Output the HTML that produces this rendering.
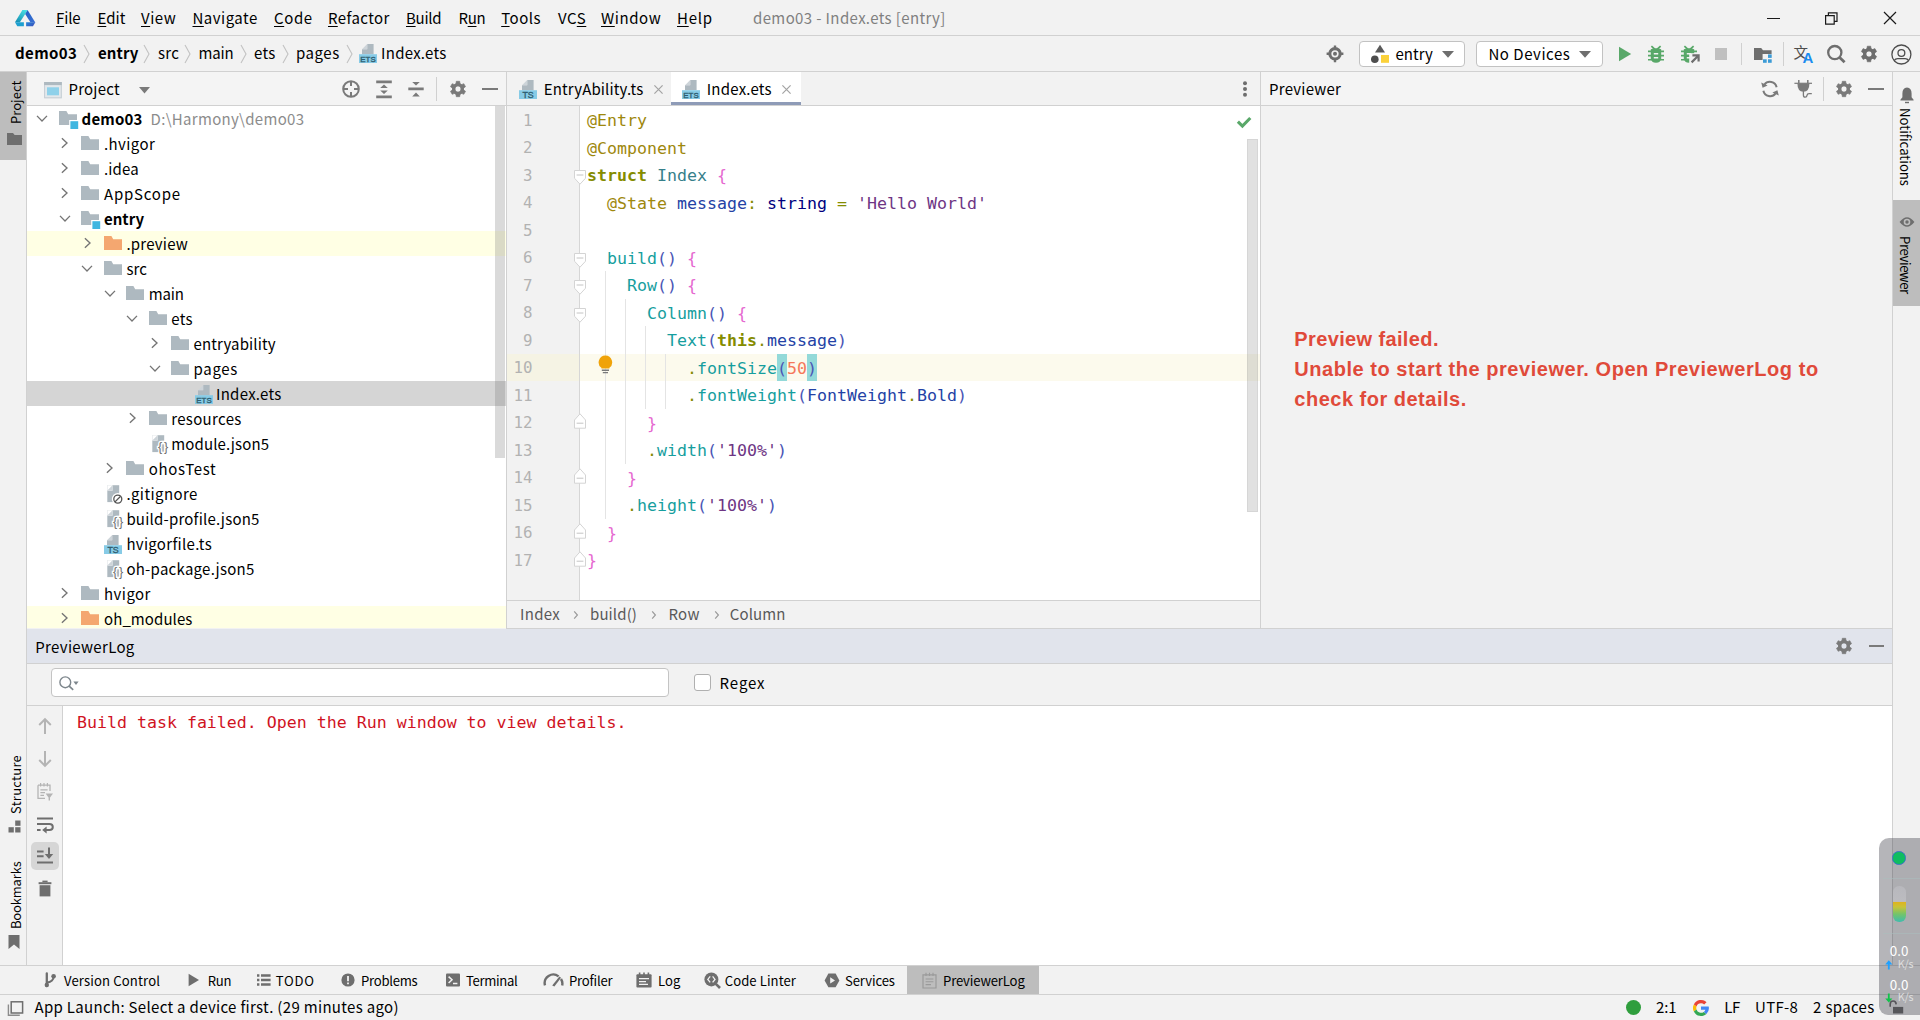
<!DOCTYPE html>
<html lang="en"><head><meta charset="utf-8"><title>demo03 - Index.ets [entry]</title>
<style>
html,body{margin:0;padding:0;}
body{width:1920px;height:1020px;overflow:hidden;background:#f2f2f2;position:relative;font-family:"Noto Sans CJK SC","Liberation Sans",sans-serif;}
.b{position:absolute;box-sizing:border-box;display:block;}
.t{position:absolute;white-space:pre;line-height:normal;color:#000;}
u{text-decoration:underline;text-underline-offset:2px;text-decoration-thickness:1px;}
</style></head>
<body>
<div class="b" style="left:0px;top:35px;width:1920px;height:1px;background:#d1d1d1;"></div>
<svg class="b" style="left:14.9px;top:9.8px;" width="21" height="17" viewBox="0 0 21 17"><defs><linearGradient id="lgc" x1="0.8" y1="0" x2="0.2" y2="1"><stop offset="0" stop-color="#48e0e2"/><stop offset="1" stop-color="#1690b4"/></linearGradient><linearGradient id="lgb" x1="0" y1="0" x2="1" y2="1"><stop offset="0" stop-color="#1f62c4"/><stop offset="1" stop-color="#3b6fd4"/></linearGradient><linearGradient id="lgr" x1="0" y1="0" x2="1" y2="0.6"><stop offset="0" stop-color="#2488d8"/><stop offset="1" stop-color="#3a55c0"/></linearGradient></defs><path d="M7.4 0H12.6L10.2 4.1L4.9 12.2H0Z" fill="url(#lgc)"/><path d="M12.6 0L20.3 12.4L15.4 12.2L10.2 4.1Z" fill="url(#lgb)"/><path d="M0 12.2H8.9V16.2H2.3Z" fill="#1c9fd0"/><path d="M11.1 12.2H20.3L18 16.2H11.1Z" fill="url(#lgr)"/></svg>
<div class="b" style="left:1767px;top:18px;width:13px;height:1px;background:#1a1a1a;"></div>
<svg class="b" style="left:1824.6px;top:11.6px;" width="13" height="13" viewBox="0 0 13 13"><path d="M0.6 3.6h8.6v8.6h-8.6z M3.4 3.6v-2.8h8.6v8.6h-2.8" fill="none" stroke="#1a1a1a" stroke-width="1.2"/></svg>
<svg class="b" style="left:1883px;top:11px;" width="14" height="14" viewBox="0 0 14 14"><path d="M1 1L13 13M13 1L1 13" stroke="#1a1a1a" stroke-width="1.2" fill="none"/></svg>
<div class="b" style="left:0px;top:71px;width:1920px;height:1px;background:#d1d1d1;"></div>
<svg class="b" style="left:83.1px;top:44px;" width="8" height="20" viewBox="0 0 8 20"><path d="M1 1 L6 10 L1 19" fill="none" stroke="#c2c2c2" stroke-width="1.1"/></svg>
<svg class="b" style="left:143.1px;top:44px;" width="8" height="20" viewBox="0 0 8 20"><path d="M1 1 L6 10 L1 19" fill="none" stroke="#c2c2c2" stroke-width="1.1"/></svg>
<svg class="b" style="left:183.6px;top:44px;" width="8" height="20" viewBox="0 0 8 20"><path d="M1 1 L6 10 L1 19" fill="none" stroke="#c2c2c2" stroke-width="1.1"/></svg>
<svg class="b" style="left:239.6px;top:44px;" width="8" height="20" viewBox="0 0 8 20"><path d="M1 1 L6 10 L1 19" fill="none" stroke="#c2c2c2" stroke-width="1.1"/></svg>
<svg class="b" style="left:281.6px;top:44px;" width="8" height="20" viewBox="0 0 8 20"><path d="M1 1 L6 10 L1 19" fill="none" stroke="#c2c2c2" stroke-width="1.1"/></svg>
<svg class="b" style="left:345.6px;top:44px;" width="8" height="20" viewBox="0 0 8 20"><path d="M1 1 L6 10 L1 19" fill="none" stroke="#c2c2c2" stroke-width="1.1"/></svg>
<svg class="b" style="left:359px;top:44px;" width="18" height="19" viewBox="0 0 18 19"><path d="M3 0H14.6V10.2H3Z" fill="#aeb9c0"/><path d="M3 0H8.2V5.2H3Z" fill="#f2f2f2"/><path d="M8.2 0V5.2H3Z" fill="#cdd4d9"/><rect x="0" y="10.2" width="18" height="8.8" fill="#87cbe6"/><text x="9" y="17.5" font-family="Liberation Sans, sans-serif" font-size="7.9" text-anchor="middle" fill="#2f5d70" stroke="#2f5d70" stroke-width="0.35">ETS</text></svg>
<svg class="b" style="left:1325px;top:44px;" width="20" height="20" viewBox="0 0 20 20"><circle cx="10" cy="9.8" r="5.2" fill="none" stroke="#6e6e6e" stroke-width="3.1"/><circle cx="10" cy="9.8" r="2" fill="#6e6e6e"/><path d="M10 1.4V4M10 15.6V18.2M1.6 9.8H4.2M15.8 9.8H18.4" stroke="#6e6e6e" stroke-width="2.4"/></svg>
<div class="b" style="left:1359px;top:40.5px;width:106px;height:26.5px;background:#fff;border:1px solid #c2c2c2;border-radius:4px;"></div>
<div class="b" style="left:1476px;top:40.5px;width:126.5px;height:26.5px;background:#fff;border:1px solid #c2c2c2;border-radius:4px;"></div>
<svg class="b" style="left:1370px;top:44px;" width="20" height="20" viewBox="0 0 20 20"><path d="M10 0.7L15 8.6H5Z" fill="#5a5a5a"/><circle cx="4.8" cy="15.2" r="3.8" fill="#4d4d4d"/><rect x="11" y="11" width="8" height="7.8" fill="#fbd13a"/></svg>
<svg class="b" style="left:1441.5px;top:51px;" width="12" height="7" viewBox="0 0 12 7"><path d="M0 0H12L6 6.8Z" fill="#6e6e6e"/></svg>
<svg class="b" style="left:1578.5px;top:51px;" width="12" height="7" viewBox="0 0 12 7"><path d="M0 0H12L6 6.8Z" fill="#6e6e6e"/></svg>
<svg class="b" style="left:1619px;top:46px;" width="13" height="16" viewBox="0 0 13 16"><path d="M0 0.7L12.2 8L0 15.3Z" fill="#59a869"/></svg>
<svg class="b" style="left:1648px;top:45px;" width="17" height="19" viewBox="0 0 17 19"><g transform="translate(0,0.7)"><g fill="#59a869"><path d="M2.8 3.6Q8 1.6 13.2 3.6V12.5Q12.6 17 8 17Q3.4 17 2.8 12.5Z"/><path d="M0 4.9H16V6.5H0ZM0 9.1H16V10.7H0ZM0 13.3H16V14.9H0Z"/></g><path d="M3.4 0.5L7 3.8M12.6 0.5L9 3.8" stroke="#59a869" stroke-width="1.7" fill="none"/><path d="M5.8 7.4H10.2V8.8H5.8ZM5.8 11.3H10.2V12.7H5.8Z" fill="#f2f2f2"/></g></svg>
<svg class="b" style="left:1681px;top:45px;" width="20" height="19" viewBox="0 0 20 19"><g transform="translate(0,0.7)"><g fill="#59a869"><path d="M2.8 3.6Q8 1.6 13.2 3.6V12.5Q12.6 17 8 17Q3.4 17 2.8 12.5Z"/><path d="M0 4.9H16V6.5H0ZM0 9.1H16V10.7H0ZM0 13.3H16V14.9H0Z"/></g><path d="M3.4 0.5L7 3.8M12.6 0.5L9 3.8" stroke="#59a869" stroke-width="1.7" fill="none"/><path d="M5.8 7.4H10.2V8.8H5.8ZM5.8 11.3H10.2V12.7H5.8Z" fill="#f2f2f2"/></g><path d="M8.2 8.2H20V19H8.2Z" fill="#f2f2f2"/><path d="M10.6 17.4L17 11M11.4 10.4H17.6V16.6" fill="none" stroke="#6e6e6e" stroke-width="2.2"/></svg>
<div class="b" style="left:1715px;top:48px;width:12px;height:12px;background:#c0c0c0;"></div>
<div class="b" style="left:1741px;top:43px;width:1px;height:22px;background:#d0d0d0;"></div>
<svg class="b" style="left:1754px;top:47.8px;" width="18" height="15" viewBox="0 0 18 15"><path d="M0 0H7.2L9 2.2H17.6V6H8.6V12H0Z" fill="#6e6e6e"/><rect x="14" y="6.4" width="3.7" height="3.5" fill="#3b9bd6"/><rect x="9" y="11.3" width="3.7" height="3.5" fill="#3b9bd6"/><rect x="14" y="11.3" width="3.7" height="3.5" fill="#3b9bd6"/></svg>
<div class="b" style="left:1783px;top:42px;width:1px;height:23.5px;background:#d0d0d0;"></div>
<svg class="b" style="left:1792px;top:43px;" width="24" height="22" viewBox="0 0 24 22"><text x="1.6" y="15.2" font-family="Noto Sans CJK SC, sans-serif" font-size="14.5" fill="#4d4d4d">文</text><text x="10.6" y="19.6" font-family="Liberation Sans, sans-serif" font-weight="700" font-size="15" fill="#1a8cf0">A</text></svg>
<svg class="b" style="left:1825px;top:43px;" width="22" height="22" viewBox="0 0 22 22"><circle cx="9.8" cy="9.6" r="6.6" fill="none" stroke="#6e6e6e" stroke-width="2.3"/><path d="M14.4 14.2L19.6 19.2" stroke="#6e6e6e" stroke-width="2.8"/></svg>
<svg class="b" style="left:1859px;top:44px;" width="20" height="20" viewBox="0 0 20 20"><circle cx="10" cy="10" r="4.50" fill="none" stroke="#6e6e6e" stroke-width="3.00"/><path d="M7.95 4.79L8.26 2.19L11.74 2.19L12.05 4.79L13.49 5.62L15.90 4.59L17.63 7.60L15.54 9.17L15.54 10.83L17.63 12.40L15.90 15.41L13.49 14.38L12.05 15.21L11.74 17.81L8.26 17.81L7.95 15.21L6.51 14.38L4.10 15.41L2.37 12.40L4.46 10.83L4.46 9.17L2.37 7.60L4.10 4.59L6.51 5.62ZM13.00 10.00A3.0 3.0 0 1 0 7.00 10.00A3.0 3.0 0 1 0 13.00 10.00Z" fill="#6e6e6e" fill-rule="evenodd" stroke="#6e6e6e" stroke-width="0.6" stroke-linejoin="round"/></svg>
<svg class="b" style="left:1889.5px;top:42.5px;" width="23" height="23" viewBox="0 0 23 23"><circle cx="11.4" cy="11.5" r="9.5" fill="none" stroke="#4d4d4d" stroke-width="1.3"/><circle cx="11.4" cy="10" r="3.4" fill="none" stroke="#4d4d4d" stroke-width="1.3"/><path d="M4.2 17.6Q5.4 15.6 7.6 15.6H15.2Q17.4 15.6 18.6 17.6" fill="none" stroke="#4d4d4d" stroke-width="1.3"/></svg>
<div class="b" style="left:26px;top:72px;width:1px;height:893px;background:#d1d1d1;"></div>
<div class="b" style="left:0px;top:72px;width:26px;height:88px;background:#bdbdbd;"></div>
<svg class="b" style="left:7px;top:132.5px;" width="15" height="12" viewBox="0 0 15 12"><path d="M0 0H6L7.6 2H15V12H0Z" fill="#6e6e6e"/></svg>
<svg class="b" style="left:8px;top:820px;" width="13" height="13" viewBox="0 0 13 13"><rect x="7.2" y="0.5" width="5.3" height="5.3" fill="#6e6e6e"/><rect x="0.5" y="7.2" width="5.3" height="5.3" fill="#6e6e6e"/><rect x="7.2" y="7.2" width="5.3" height="5.3" fill="#6e6e6e"/></svg>
<svg class="b" style="left:8px;top:935px;" width="12" height="14" viewBox="0 0 12 14"><path d="M0.5 0H11.5V14L6 9.6L0.5 14Z" fill="#6e6e6e"/></svg>
<div class="b" style="left:27px;top:105px;width:479px;height:1px;background:#d1d1d1;"></div>
<div class="b" style="left:27px;top:106px;width:479px;height:522px;background:#fff;"></div>
<div class="b" style="left:506px;top:72px;width:1px;height:557px;background:#d1d1d1;"></div>
<div class="b" style="left:27px;top:72px;width:479px;height:33px;background:#f4f4f4;"></div>
<svg class="b" style="left:44px;top:81.5px;" width="18" height="17" viewBox="0 0 18 17"><rect x="0.1" y="0" width="17.7" height="16.3" fill="#e3e8eb"/><rect x="0.6" y="0.5" width="16.7" height="15.3" fill="none" stroke="#c5cdd3" stroke-width="1"/><rect x="0.1" y="0" width="17.7" height="3.1" fill="#aeb9c0"/><rect x="3" y="5.3" width="12" height="8" fill="#8fd1ea"/></svg>
<svg class="b" style="left:139.4px;top:87.2px;" width="11" height="7" viewBox="0 0 11 7"><path d="M0 0H11L5.5 6.6Z" fill="#7a7a7a"/></svg>
<svg class="b" style="left:341px;top:79px;" width="20" height="20" viewBox="0 0 20 20"><circle cx="10" cy="10" r="7.8" fill="none" stroke="#7a7a7a" stroke-width="2"/><path d="M10 2.4V7M10 13V17.6M2.4 10H7M13 10H17.6" stroke="#7a7a7a" stroke-width="2"/></svg>
<svg class="b" style="left:376px;top:79.6px;" width="16" height="19" viewBox="0 0 16 19"><path d="M0.2 0.4H15.8V3.2H0.2ZM0.2 15.4H15.8V18.2H0.2ZM8 4.6L11.8 8H4.2ZM8 14L11.8 10.6H4.2Z" fill="#7a7a7a"/></svg>
<svg class="b" style="left:408px;top:80px;" width="16" height="18" viewBox="0 0 16 18"><path d="M0.3 7.6H15.7V10.3H0.3ZM8 5.4L11.8 2H4.2ZM8 12.6L11.8 16.4H4.2Z" fill="#7a7a7a"/></svg>
<div class="b" style="left:436px;top:77px;width:1px;height:24px;background:#d0d0d0;"></div>
<svg class="b" style="left:447.9px;top:79px;" width="20" height="20" viewBox="0 0 20 20"><circle cx="10" cy="10" r="4.44" fill="none" stroke="#7a7a7a" stroke-width="2.96"/><path d="M7.95 4.86L8.26 2.29L11.74 2.29L12.05 4.86L13.42 5.66L15.81 4.64L17.54 7.65L15.47 9.21L15.47 10.79L17.54 12.35L15.81 15.36L13.42 14.34L12.05 15.14L11.74 17.71L8.26 17.71L7.95 15.14L6.58 14.34L4.19 15.36L2.46 12.35L4.53 10.79L4.53 9.21L2.46 7.65L4.19 4.64L6.58 5.66ZM12.96 10.00A2.9625000000000004 2.9625000000000004 0 1 0 7.04 10.00A2.9625000000000004 2.9625000000000004 0 1 0 12.96 10.00Z" fill="#7a7a7a" fill-rule="evenodd" stroke="#7a7a7a" stroke-width="0.6" stroke-linejoin="round"/></svg>
<div class="b" style="left:482.4px;top:87.8px;width:15.4px;height:2.4px;background:#7a7a7a;"></div>
<div class="b" style="left:27px;top:231px;width:479px;height:25px;background:#ffffe4;"></div>
<div class="b" style="left:27px;top:381px;width:479px;height:25px;background:#d5d5d5;"></div>
<div class="b" style="left:27px;top:606px;width:479px;height:22px;background:#ffffe4;"></div>
<svg class="b" style="left:36.0px;top:114.8px;" width="12" height="8" viewBox="0 0 12 8"><path d="M1 0.9L6 6L11 0.9" fill="none" stroke="#747474" stroke-width="1.35"/></svg>
<svg class="b" style="left:58.8px;top:111.3px;" width="20" height="18" viewBox="0 0 20 18"><path d="M0 0H7.4L9.2 3.2H18V14H0Z" fill="#aeb9c0"/><rect x="10.2" y="9" width="9.8" height="9" fill="#fff"/><rect x="11.4" y="10.2" width="7.8" height="7.8" fill="#40b6e0"/></svg>
<svg class="b" style="left:61.4px;top:136.8px;" width="8" height="12" viewBox="0 0 8 12"><path d="M0.9 1.2L6 6L0.9 10.8" fill="none" stroke="#747474" stroke-width="1.35"/></svg>
<svg class="b" style="left:81.3px;top:136.1px;" width="18" height="14" viewBox="0 0 18 14"><path d="M0 0H7.4L9.2 3.2H18V14H0Z" fill="#aeb9c0"/></svg>
<svg class="b" style="left:61.4px;top:161.8px;" width="8" height="12" viewBox="0 0 8 12"><path d="M0.9 1.2L6 6L0.9 10.8" fill="none" stroke="#747474" stroke-width="1.35"/></svg>
<svg class="b" style="left:81.3px;top:161.1px;" width="18" height="14" viewBox="0 0 18 14"><path d="M0 0H7.4L9.2 3.2H18V14H0Z" fill="#aeb9c0"/></svg>
<svg class="b" style="left:61.4px;top:186.8px;" width="8" height="12" viewBox="0 0 8 12"><path d="M0.9 1.2L6 6L0.9 10.8" fill="none" stroke="#747474" stroke-width="1.35"/></svg>
<svg class="b" style="left:81.3px;top:186.1px;" width="18" height="14" viewBox="0 0 18 14"><path d="M0 0H7.4L9.2 3.2H18V14H0Z" fill="#aeb9c0"/></svg>
<svg class="b" style="left:58.5px;top:214.8px;" width="12" height="8" viewBox="0 0 12 8"><path d="M1 0.9L6 6L11 0.9" fill="none" stroke="#747474" stroke-width="1.35"/></svg>
<svg class="b" style="left:81.3px;top:211.3px;" width="20" height="18" viewBox="0 0 20 18"><path d="M0 0H7.4L9.2 3.2H18V14H0Z" fill="#aeb9c0"/><rect x="10.2" y="9" width="9.8" height="9" fill="#fff"/><rect x="11.4" y="10.2" width="7.8" height="7.8" fill="#40b6e0"/></svg>
<svg class="b" style="left:83.9px;top:236.8px;" width="8" height="12" viewBox="0 0 8 12"><path d="M0.9 1.2L6 6L0.9 10.8" fill="none" stroke="#747474" stroke-width="1.35"/></svg>
<svg class="b" style="left:103.8px;top:236.1px;" width="18" height="14" viewBox="0 0 18 14"><path d="M0 0H7.4L9.2 3.2H18V14H0Z" fill="#f4a770"/></svg>
<svg class="b" style="left:81.0px;top:264.8px;" width="12" height="8" viewBox="0 0 12 8"><path d="M1 0.9L6 6L11 0.9" fill="none" stroke="#747474" stroke-width="1.35"/></svg>
<svg class="b" style="left:103.8px;top:261.1px;" width="18" height="14" viewBox="0 0 18 14"><path d="M0 0H7.4L9.2 3.2H18V14H0Z" fill="#aeb9c0"/></svg>
<svg class="b" style="left:103.5px;top:289.8px;" width="12" height="8" viewBox="0 0 12 8"><path d="M1 0.9L6 6L11 0.9" fill="none" stroke="#747474" stroke-width="1.35"/></svg>
<svg class="b" style="left:126.3px;top:286.1px;" width="18" height="14" viewBox="0 0 18 14"><path d="M0 0H7.4L9.2 3.2H18V14H0Z" fill="#aeb9c0"/></svg>
<svg class="b" style="left:126.0px;top:314.8px;" width="12" height="8" viewBox="0 0 12 8"><path d="M1 0.9L6 6L11 0.9" fill="none" stroke="#747474" stroke-width="1.35"/></svg>
<svg class="b" style="left:148.8px;top:311.1px;" width="18" height="14" viewBox="0 0 18 14"><path d="M0 0H7.4L9.2 3.2H18V14H0Z" fill="#aeb9c0"/></svg>
<svg class="b" style="left:151.4px;top:336.8px;" width="8" height="12" viewBox="0 0 8 12"><path d="M0.9 1.2L6 6L0.9 10.8" fill="none" stroke="#747474" stroke-width="1.35"/></svg>
<svg class="b" style="left:171.3px;top:336.1px;" width="18" height="14" viewBox="0 0 18 14"><path d="M0 0H7.4L9.2 3.2H18V14H0Z" fill="#aeb9c0"/></svg>
<svg class="b" style="left:148.5px;top:364.8px;" width="12" height="8" viewBox="0 0 12 8"><path d="M1 0.9L6 6L11 0.9" fill="none" stroke="#747474" stroke-width="1.35"/></svg>
<svg class="b" style="left:171.3px;top:361.1px;" width="18" height="14" viewBox="0 0 18 14"><path d="M0 0H7.4L9.2 3.2H18V14H0Z" fill="#aeb9c0"/></svg>
<svg class="b" style="left:194.8px;top:385px;" width="18" height="19" viewBox="0 0 18 19"><path d="M3 0H14.6V10.2H3Z" fill="#aeb9c0"/><path d="M3 0H8.2V5.2H3Z" fill="#d5d5d5"/><path d="M8.2 0V5.2H3Z" fill="#cdd4d9"/><rect x="0" y="10.2" width="18" height="8.8" fill="#87cbe6"/><text x="9" y="17.5" font-family="Liberation Sans, sans-serif" font-size="7.9" text-anchor="middle" fill="#2f5d70" stroke="#2f5d70" stroke-width="0.35">ETS</text></svg>
<svg class="b" style="left:128.9px;top:411.8px;" width="8" height="12" viewBox="0 0 8 12"><path d="M0.9 1.2L6 6L0.9 10.8" fill="none" stroke="#747474" stroke-width="1.35"/></svg>
<svg class="b" style="left:148.8px;top:411.1px;" width="18" height="14" viewBox="0 0 18 14"><path d="M0 0H7.4L9.2 3.2H18V14H0Z" fill="#aeb9c0"/></svg>
<svg class="b" style="left:148.8px;top:433.6px;" width="22" height="22" viewBox="0 0 22 22"><path d="M3.3 1.2H15.2V18.1H3.3Z" fill="#aeb9c0"/><path d="M3.3 1.2H8.6V6.6H3.3Z" fill="#fff"/><path d="M8.6 1.2V6.6H3.3Z" fill="#cdd4d9"/><text x="15" y="16.7" font-family="Liberation Sans, sans-serif" font-size="12.6" text-anchor="middle" letter-spacing="1.7" fill="#6e6e6e" stroke="#fff" stroke-width="2.6" paint-order="stroke">{}</text></svg>
<svg class="b" style="left:106.4px;top:461.8px;" width="8" height="12" viewBox="0 0 8 12"><path d="M0.9 1.2L6 6L0.9 10.8" fill="none" stroke="#747474" stroke-width="1.35"/></svg>
<svg class="b" style="left:126.3px;top:461.1px;" width="18" height="14" viewBox="0 0 18 14"><path d="M0 0H7.4L9.2 3.2H18V14H0Z" fill="#aeb9c0"/></svg>
<svg class="b" style="left:103.8px;top:483.6px;" width="22" height="22" viewBox="0 0 22 22"><path d="M3.3 1.2H15.2V18.1H3.3Z" fill="#aeb9c0"/><path d="M3.3 1.2H8.6V6.6H3.3Z" fill="#fff"/><path d="M8.6 1.2V6.6H3.3Z" fill="#cdd4d9"/><circle cx="13.8" cy="15.1" r="6" fill="#fff"/><circle cx="13.8" cy="15.1" r="4" fill="none" stroke="#555" stroke-width="1.3"/><path d="M11 17.9L16.6 12.3" stroke="#555" stroke-width="1.3"/></svg>
<svg class="b" style="left:103.8px;top:508.6px;" width="22" height="22" viewBox="0 0 22 22"><path d="M3.3 1.2H15.2V18.1H3.3Z" fill="#aeb9c0"/><path d="M3.3 1.2H8.6V6.6H3.3Z" fill="#fff"/><path d="M8.6 1.2V6.6H3.3Z" fill="#cdd4d9"/><text x="15" y="16.7" font-family="Liberation Sans, sans-serif" font-size="12.6" text-anchor="middle" letter-spacing="1.7" fill="#6e6e6e" stroke="#fff" stroke-width="2.6" paint-order="stroke">{}</text></svg>
<svg class="b" style="left:104.3px;top:535px;" width="18" height="19" viewBox="0 0 18 19"><path d="M3 0H14.6V10.2H3Z" fill="#aeb9c0"/><path d="M3 0H8.2V5.2H3Z" fill="#fff"/><path d="M8.2 0V5.2H3Z" fill="#cdd4d9"/><rect x="0" y="10.2" width="18" height="8.8" fill="#87cbe6"/><text x="9" y="17.5" font-family="Liberation Sans, sans-serif" font-size="8.8" text-anchor="middle" fill="#2f5d70" stroke="#2f5d70" stroke-width="0.35">TS</text></svg>
<svg class="b" style="left:103.8px;top:558.6px;" width="22" height="22" viewBox="0 0 22 22"><path d="M3.3 1.2H15.2V18.1H3.3Z" fill="#aeb9c0"/><path d="M3.3 1.2H8.6V6.6H3.3Z" fill="#fff"/><path d="M8.6 1.2V6.6H3.3Z" fill="#cdd4d9"/><text x="15" y="16.7" font-family="Liberation Sans, sans-serif" font-size="12.6" text-anchor="middle" letter-spacing="1.7" fill="#6e6e6e" stroke="#fff" stroke-width="2.6" paint-order="stroke">{}</text></svg>
<svg class="b" style="left:61.4px;top:586.8px;" width="8" height="12" viewBox="0 0 8 12"><path d="M0.9 1.2L6 6L0.9 10.8" fill="none" stroke="#747474" stroke-width="1.35"/></svg>
<svg class="b" style="left:81.3px;top:586.1px;" width="18" height="14" viewBox="0 0 18 14"><path d="M0 0H7.4L9.2 3.2H18V14H0Z" fill="#aeb9c0"/></svg>
<svg class="b" style="left:61.4px;top:611.8px;" width="8" height="12" viewBox="0 0 8 12"><path d="M0.9 1.2L6 6L0.9 10.8" fill="none" stroke="#747474" stroke-width="1.35"/></svg>
<svg class="b" style="left:81.3px;top:611.1px;" width="18" height="14" viewBox="0 0 18 14"><path d="M0 0H7.4L9.2 3.2H18V14H0Z" fill="#f4a770"/></svg>
<div class="b" style="left:494.5px;top:106px;width:10px;height:352px;background:rgba(120,120,120,0.27);"></div>
<div class="b" style="left:507px;top:105px;width:753px;height:1px;background:#d1d1d1;"></div>
<div class="b" style="left:1260px;top:72px;width:1px;height:557px;background:#d1d1d1;"></div>
<div class="b" style="left:671px;top:72px;width:130px;height:33px;background:#fff;"></div>
<div class="b" style="left:671px;top:102px;width:130px;height:3.4px;background:#8e9bb7;"></div>
<svg class="b" style="left:519px;top:80.3px;" width="18" height="19" viewBox="0 0 18 19"><path d="M3 0H14.6V10.2H3Z" fill="#aeb9c0"/><path d="M3 0H8.2V5.2H3Z" fill="#f2f2f2"/><path d="M8.2 0V5.2H3Z" fill="#cdd4d9"/><rect x="0" y="10.2" width="18" height="8.8" fill="#87cbe6"/><text x="9" y="17.5" font-family="Liberation Sans, sans-serif" font-size="8.8" text-anchor="middle" fill="#2f5d70" stroke="#2f5d70" stroke-width="0.35">TS</text></svg>
<svg class="b" style="left:653.6px;top:84.8px;" width="9" height="9" viewBox="0 0 9 9"><path d="M0.4 0.4L8.6 8.6M8.6 0.4L0.4 8.6" stroke="#a3a3a3" stroke-width="1.2" fill="none"/></svg>
<svg class="b" style="left:682px;top:80.3px;" width="18" height="19" viewBox="0 0 18 19"><path d="M3 0H14.6V10.2H3Z" fill="#aeb9c0"/><path d="M3 0H8.2V5.2H3Z" fill="#fff"/><path d="M8.2 0V5.2H3Z" fill="#cdd4d9"/><rect x="0" y="10.2" width="18" height="8.8" fill="#87cbe6"/><text x="9" y="17.5" font-family="Liberation Sans, sans-serif" font-size="7.9" text-anchor="middle" fill="#2f5d70" stroke="#2f5d70" stroke-width="0.35">ETS</text></svg>
<svg class="b" style="left:781.8px;top:84.8px;" width="9" height="9" viewBox="0 0 9 9"><path d="M0.4 0.4L8.6 8.6M8.6 0.4L0.4 8.6" stroke="#a3a3a3" stroke-width="1.2" fill="none"/></svg>
<svg class="b" style="left:1242px;top:80px;" width="6" height="18" viewBox="0 0 6 18"><circle cx="3" cy="3.3" r="2" fill="#6e6e6e"/><circle cx="3" cy="8.9" r="2" fill="#6e6e6e"/><circle cx="3" cy="14.7" r="2" fill="#6e6e6e"/></svg>
<div class="b" style="left:507px;top:106px;width:753px;height:494px;background:#fff;"></div>
<div class="b" style="left:507px;top:106px;width:72px;height:494px;background:#f2f2f2;"></div>
<div class="b" style="left:579px;top:106px;width:1px;height:494px;background:#d6d6d6;"></div>
<div class="b" style="left:507px;top:354px;width:753px;height:27px;background:#fcfaed;"></div>
<div class="b" style="left:507px;top:354px;width:72px;height:27px;background:#f5f3e4;"></div>
<div class="b" style="left:579px;top:354px;width:1px;height:27px;background:#d6d6d6;"></div>
<div class="b" style="left:605px;top:271.0px;width:1px;height:247.5px;background:#e4e4e4;"></div>
<div class="b" style="left:625px;top:298.5px;width:1px;height:165.0px;background:#e4e4e4;"></div>
<div class="b" style="left:645px;top:326.0px;width:1px;height:82.5px;background:#e4e4e4;"></div>
<div class="b" style="left:665px;top:353.5px;width:1px;height:55.0px;background:#e4e4e4;"></div>
<div class="b" style="left:777px;top:354px;width:10px;height:27px;background:#93d9d9;"></div>
<div class="b" style="left:807px;top:354px;width:10px;height:27px;background:#93d9d9;"></div>
<svg class="b" style="left:574px;top:170.4px;" width="12" height="15" viewBox="0 0 12 15"><path d="M0.5 0.5H11.5V8.2L6 14.2L0.5 8.2Z" fill="#fff" stroke="#d4d4d4" stroke-width="1"/><path d="M2.6 5H9.4" stroke="#c4c4c4" stroke-width="1"/></svg>
<svg class="b" style="left:574px;top:252.9px;" width="12" height="15" viewBox="0 0 12 15"><path d="M0.5 0.5H11.5V8.2L6 14.2L0.5 8.2Z" fill="#fff" stroke="#d4d4d4" stroke-width="1"/><path d="M2.6 5H9.4" stroke="#c4c4c4" stroke-width="1"/></svg>
<svg class="b" style="left:574px;top:280.4px;" width="12" height="15" viewBox="0 0 12 15"><path d="M0.5 0.5H11.5V8.2L6 14.2L0.5 8.2Z" fill="#fff" stroke="#d4d4d4" stroke-width="1"/><path d="M2.6 5H9.4" stroke="#c4c4c4" stroke-width="1"/></svg>
<svg class="b" style="left:574px;top:307.9px;" width="12" height="15" viewBox="0 0 12 15"><path d="M0.5 0.5H11.5V8.2L6 14.2L0.5 8.2Z" fill="#fff" stroke="#d4d4d4" stroke-width="1"/><path d="M2.6 5H9.4" stroke="#c4c4c4" stroke-width="1"/></svg>
<svg class="b" style="left:574px;top:413.4px;" width="12" height="16" viewBox="0 0 12 16"><path d="M0.5 15.2H11.5V7L6 0.8L0.5 7Z" fill="#fff" stroke="#d4d4d4" stroke-width="1"/><path d="M2.6 10.2H9.4" stroke="#c4c4c4" stroke-width="1"/></svg>
<svg class="b" style="left:574px;top:468.4px;" width="12" height="16" viewBox="0 0 12 16"><path d="M0.5 15.2H11.5V7L6 0.8L0.5 7Z" fill="#fff" stroke="#d4d4d4" stroke-width="1"/><path d="M2.6 10.2H9.4" stroke="#c4c4c4" stroke-width="1"/></svg>
<svg class="b" style="left:574px;top:523.4px;" width="12" height="16" viewBox="0 0 12 16"><path d="M0.5 15.2H11.5V7L6 0.8L0.5 7Z" fill="#fff" stroke="#d4d4d4" stroke-width="1"/><path d="M2.6 10.2H9.4" stroke="#c4c4c4" stroke-width="1"/></svg>
<svg class="b" style="left:574px;top:550.9px;" width="12" height="16" viewBox="0 0 12 16"><path d="M0.5 15.2H11.5V7L6 0.8L0.5 7Z" fill="#fff" stroke="#d4d4d4" stroke-width="1"/><path d="M2.6 10.2H9.4" stroke="#c4c4c4" stroke-width="1"/></svg>
<svg class="b" style="left:597.8px;top:355px;" width="15" height="19" viewBox="0 0 15 19"><path d="M7.4 0.4A6.9 6.9 0 0 1 11.4 12.8V13.4H3.4V12.8A6.9 6.9 0 0 1 7.4 0.4Z" fill="#f0a30a"/><path d="M3.8 15.2H11M4.8 17.6H10" stroke="#7a7a7a" stroke-width="1.4"/></svg>
<svg class="b" style="left:1236px;top:115px;" width="16" height="14" viewBox="0 0 16 14"><path d="M1.9 6.6L6.4 11L14.3 3" fill="none" stroke="#59a869" stroke-width="3.1"/></svg>
<div class="b" style="left:1247px;top:139.3px;width:11.2px;height:372.5px;background:rgba(120,120,120,0.22);border:1px solid rgba(120,120,120,0.1);"></div>
<div class="b" style="left:507px;top:600px;width:753px;height:1px;background:#d1d1d1;"></div>
<div class="b" style="left:507px;top:601px;width:753px;height:27px;background:#f2f2f2;"></div>
<div class="b" style="left:507px;top:628px;width:1385px;height:1px;background:#d1d1d1;"></div>
<svg class="b" style="left:573px;top:610px;" width="6" height="10" viewBox="0 0 6 10"><path d="M1.2 1.4L4.4 5L1.2 8.6" fill="none" stroke="#9a9a9a" stroke-width="1.2"/></svg>
<svg class="b" style="left:650.6px;top:610px;" width="6" height="10" viewBox="0 0 6 10"><path d="M1.2 1.4L4.4 5L1.2 8.6" fill="none" stroke="#9a9a9a" stroke-width="1.2"/></svg>
<svg class="b" style="left:713.5px;top:610px;" width="6" height="10" viewBox="0 0 6 10"><path d="M1.2 1.4L4.4 5L1.2 8.6" fill="none" stroke="#9a9a9a" stroke-width="1.2"/></svg>
<div class="b" style="left:1261px;top:72px;width:631px;height:33px;background:#f4f4f4;"></div>
<div class="b" style="left:1261px;top:105px;width:631px;height:1px;background:#d1d1d1;"></div>
<svg class="b" style="left:1760px;top:79px;" width="20" height="20" viewBox="0 0 20 20"><path d="M16.6 8.2A6.8 6.8 0 0 0 4.4 5.6M3.4 11.8A6.8 6.8 0 0 0 15.6 14.4" fill="none" stroke="#7a7a7a" stroke-width="2"/><path d="M1.2 3.4L2.6 8.8L7.6 6.6Z" fill="#7a7a7a"/><path d="M18.8 16.6L17.4 11.2L12.4 13.4Z" fill="#7a7a7a"/></svg>
<svg class="b" style="left:1793px;top:79px;" width="20" height="20" viewBox="0 0 20 20"><path d="M1.4 3.7H19V4.9H1.4Z" fill="#7a7a7a"/><path d="M4.4 4.6H16.4Q16.4 12.8 10.4 12.8Q4.4 12.8 4.4 4.6Z" fill="#7a7a7a"/><path d="M5.8 1V4.4M14.8 1V4.4" stroke="#7a7a7a" stroke-width="1.5"/><path d="M10.4 12V16Q10.4 18.2 12.2 18.2Q13.8 18.2 14 16.4Q14.2 14.6 16.2 14.6H18.8" fill="none" stroke="#7a7a7a" stroke-width="1.3"/></svg>
<div class="b" style="left:1823px;top:77px;width:1px;height:24px;background:#d0d0d0;"></div>
<svg class="b" style="left:1833.8px;top:79px;" width="20" height="20" viewBox="0 0 20 20"><circle cx="10" cy="10" r="4.44" fill="none" stroke="#7a7a7a" stroke-width="2.96"/><path d="M7.95 4.86L8.26 2.29L11.74 2.29L12.05 4.86L13.42 5.66L15.81 4.64L17.54 7.65L15.47 9.21L15.47 10.79L17.54 12.35L15.81 15.36L13.42 14.34L12.05 15.14L11.74 17.71L8.26 17.71L7.95 15.14L6.58 14.34L4.19 15.36L2.46 12.35L4.53 10.79L4.53 9.21L2.46 7.65L4.19 4.64L6.58 5.66ZM12.96 10.00A2.9625000000000004 2.9625000000000004 0 1 0 7.04 10.00A2.9625000000000004 2.9625000000000004 0 1 0 12.96 10.00Z" fill="#7a7a7a" fill-rule="evenodd" stroke="#7a7a7a" stroke-width="0.6" stroke-linejoin="round"/></svg>
<div class="b" style="left:1868.4px;top:87.8px;width:15.2px;height:2.4px;background:#7a7a7a;"></div>
<div class="b" style="left:1892px;top:72px;width:1px;height:893px;background:#d1d1d1;"></div>
<svg class="b" style="left:1899px;top:87px;" width="16" height="17" viewBox="0 0 16 17"><path d="M8 0.6Q12.6 1.2 12.6 6.6V10.2L14.6 12.8V13.6H1.4V12.8L3.4 10.2V6.6Q3.4 1.2 8 0.6Z" fill="#6e6e6e"/><path d="M6 14.8H10V16.2H6Z" fill="#6e6e6e"/></svg>
<div class="b" style="left:1893px;top:200px;width:27px;height:106px;background:#bdbdbd;"></div>
<svg class="b" style="left:1899px;top:216px;" width="16" height="12" viewBox="0 0 16 12"><path d="M0.6 6Q8 -3.4 15.4 6Q8 15.4 0.6 6Z" fill="#6e6e6e"/><circle cx="8" cy="6" r="3.3" fill="#bdbdbd"/><circle cx="8" cy="6" r="1.7" fill="#6e6e6e"/></svg>
<div class="b" style="left:27px;top:629px;width:1865px;height:34px;background:#e1e4ec;"></div>
<div class="b" style="left:27px;top:663px;width:1865px;height:1px;background:#d1d1d1;"></div>
<svg class="b" style="left:1833.9px;top:636.3px;" width="20" height="20" viewBox="0 0 20 20"><circle cx="10" cy="10" r="4.44" fill="none" stroke="#7a7a7a" stroke-width="2.96"/><path d="M7.95 4.86L8.26 2.29L11.74 2.29L12.05 4.86L13.42 5.66L15.81 4.64L17.54 7.65L15.47 9.21L15.47 10.79L17.54 12.35L15.81 15.36L13.42 14.34L12.05 15.14L11.74 17.71L8.26 17.71L7.95 15.14L6.58 14.34L4.19 15.36L2.46 12.35L4.53 10.79L4.53 9.21L2.46 7.65L4.19 4.64L6.58 5.66ZM12.96 10.00A2.9625000000000004 2.9625000000000004 0 1 0 7.04 10.00A2.9625000000000004 2.9625000000000004 0 1 0 12.96 10.00Z" fill="#7a7a7a" fill-rule="evenodd" stroke="#7a7a7a" stroke-width="0.6" stroke-linejoin="round"/></svg>
<div class="b" style="left:1868.6px;top:645.1px;width:15.2px;height:2.4px;background:#7a7a7a;"></div>
<div class="b" style="left:27px;top:705px;width:1865px;height:1px;background:#d1d1d1;"></div>
<div class="b" style="left:51px;top:667.5px;width:618px;height:29.6px;background:#fff;border:1px solid #c4c4c4;border-radius:4px;"></div>
<svg class="b" style="left:58px;top:674px;" width="22" height="18" viewBox="0 0 22 18"><circle cx="7.3" cy="8.3" r="5.4" fill="none" stroke="#7d868c" stroke-width="1.4"/><path d="M11.2 12.2L15.2 15.8" stroke="#7d868c" stroke-width="1.7"/><path d="M15.4 7.6H20.6L18 11Z" fill="#7d868c"/></svg>
<div class="b" style="left:694px;top:674px;width:17px;height:17px;background:#fff;border:1px solid #b0b0b0;border-radius:3px;"></div>
<div class="b" style="left:63px;top:706px;width:1829px;height:259px;background:#fff;"></div>
<div class="b" style="left:62px;top:706px;width:1px;height:259px;background:#d1d1d1;"></div>
<svg class="b" style="left:37px;top:717px;" width="16" height="18" viewBox="0 0 16 18"><path d="M8 2V17M2.2 8L8 2.2L13.8 8" fill="none" stroke="#b4b4b4" stroke-width="2"/></svg>
<svg class="b" style="left:37px;top:750px;" width="16" height="18" viewBox="0 0 16 18"><path d="M8 1V16M2.2 10L8 15.8L13.8 10" fill="none" stroke="#b4b4b4" stroke-width="2"/></svg>
<svg class="b" style="left:36px;top:782px;" width="18" height="19" viewBox="0 0 18 19"><path d="M2 3.2H14V9M2 3.2V16.4H9" fill="none" stroke="#b4b4b4" stroke-width="1.3"/><path d="M4.6 1V4.6M8 1V4.6M11.4 1V4.6" stroke="#b4b4b4" stroke-width="1.2"/><path d="M4.4 7.8H11.6M4.4 10.6H9M4.4 13.4H8" stroke="#b4b4b4" stroke-width="1.2"/><path d="M9.6 11.4H17L13.3 16.4Z" fill="#b4b4b4"/><path d="M13.3 15.6V18.6" stroke="#b4b4b4" stroke-width="1.4"/></svg>
<svg class="b" style="left:36px;top:816px;" width="18" height="18" viewBox="0 0 18 18"><path d="M1 2.6H17M1 8H13.4Q16.8 8 16.8 11Q16.8 14 13.4 14H9" fill="none" stroke="#6e6e6e" stroke-width="2"/><path d="M1 14H4.6" stroke="#6e6e6e" stroke-width="2"/><path d="M10.6 10.4V17.6L6.2 14Z" fill="#6e6e6e"/></svg>
<div class="b" style="left:31.2px;top:842.2px;width:27.8px;height:27.8px;background:#d6d6d6;border-radius:5px;"></div>
<svg class="b" style="left:36px;top:847px;" width="18" height="18" viewBox="0 0 18 18"><path d="M1 4.6H7.6M1 9.2H7.6M1 15.4H17" stroke="#6e6e6e" stroke-width="2" fill="none"/><path d="M13 0.6V10" stroke="#6e6e6e" stroke-width="2"/><path d="M8.8 7H17.2L13 12Z" fill="#6e6e6e"/></svg>
<svg class="b" style="left:38px;top:880px;" width="14" height="17" viewBox="0 0 14 17"><path d="M4.4 0.6H9.6V2.2H4.4Z" fill="#6e6e6e"/><path d="M0.6 2.2H13.4V4.2H0.6Z" fill="#6e6e6e"/><path d="M1.6 5.2H12.4V16.4H1.6Z" fill="#6e6e6e"/></svg>
<div class="b" style="left:0px;top:965px;width:1920px;height:1px;background:#d1d1d1;"></div>
<div class="b" style="left:0px;top:994px;width:1920px;height:1px;background:#d1d1d1;"></div>
<div class="b" style="left:906.5px;top:966px;width:132px;height:28px;background:#bdbdbd;"></div>
<svg class="b" style="left:44px;top:972px;" width="13" height="16" viewBox="0 0 13 16"><path d="M2.8 1.4V14" stroke="#6e6e6e" stroke-width="2.3" stroke-linecap="round"/><circle cx="2.8" cy="13" r="2.2" fill="#6e6e6e"/><circle cx="9.6" cy="4.2" r="2.3" fill="#6e6e6e"/><path d="M9.6 5Q9.4 9.4 3 10.6" fill="none" stroke="#6e6e6e" stroke-width="2.1"/></svg>
<svg class="b" style="left:188px;top:973px;" width="12" height="14" viewBox="0 0 12 14"><path d="M0.6 0.8L11 7L0.6 13.2Z" fill="#6e6e6e"/></svg>
<svg class="b" style="left:256.5px;top:974px;" width="14" height="12" viewBox="0 0 14 12"><path d="M0 0.3H2.4V2.8H0ZM0 4.8H2.4V7.3H0ZM0 9.3H2.4V11.8H0ZM4 0.3H13.6V2.8H4ZM4 4.8H13.6V7.3H4ZM4 9.3H13.6V11.8H4Z" fill="#6e6e6e"/></svg>
<svg class="b" style="left:340.5px;top:973px;" width="14" height="14" viewBox="0 0 14 14"><circle cx="7" cy="7" r="6.6" fill="#6e6e6e"/><path d="M6.1 3H7.9V8.2H6.1ZM6.1 9.4H7.9V11.2H6.1Z" fill="#f2f2f2"/></svg>
<svg class="b" style="left:446px;top:973px;" width="14" height="14" viewBox="0 0 14 14"><rect x="0" y="0.4" width="14" height="13.2" rx="1" fill="#6e6e6e"/><path d="M2.6 3.6L6 6.8L2.6 10M7 10.4H11.4" fill="none" stroke="#f2f2f2" stroke-width="1.5"/></svg>
<svg class="b" style="left:543px;top:972px;" width="21" height="15" viewBox="0 0 21 15"><path d="M2 13.4A8.6 8.6 0 0 1 15.6 4.4" fill="none" stroke="#6e6e6e" stroke-width="2.4"/><path d="M18 7A8.6 8.6 0 0 1 19.2 13.4" fill="none" stroke="#6e6e6e" stroke-width="2.4"/><path d="M9.2 13.6L16.4 4.6L18 5.8L11.4 14.6Z" fill="#6e6e6e"/></svg>
<svg class="b" style="left:636px;top:972px;" width="16" height="16" viewBox="0 0 16 16"><rect x="0.4" y="2.2" width="15.2" height="13.4" rx="1" fill="#6e6e6e"/><path d="M3.6 0.4V3.4M8 0.4V3.4M12.4 0.4V3.4" stroke="#6e6e6e" stroke-width="1.6"/><path d="M3 6.6H13M3 9.6H10M3 12.4H12" stroke="#f2f2f2" stroke-width="1.4"/></svg>
<svg class="b" style="left:704px;top:972px;" width="17" height="17" viewBox="0 0 17 17"><circle cx="7.4" cy="7.4" r="7" fill="#6e6e6e"/><path d="M11.8 11.8L16 16" stroke="#6e6e6e" stroke-width="2.6"/><path d="M6.2 4.4L3.8 7.4L6.2 10.4M8.6 4.4L11 7.4L8.6 10.4" fill="none" stroke="#f2f2f2" stroke-width="1.3"/></svg>
<svg class="b" style="left:824px;top:973px;" width="16" height="15" viewBox="0 0 16 15"><path d="M4.4 0.6H11.6L15.4 7.4L11.6 14.2H4.4L0.6 7.4Z" fill="#6e6e6e"/><path d="M6.2 4.2L11 7.4L6.2 10.6Z" fill="#f2f2f2"/></svg>
<svg class="b" style="left:921.5px;top:972px;" width="15" height="17" viewBox="0 0 15 17"><path d="M1 2.8H14V16H1Z" fill="none" stroke="#9a9a9a" stroke-width="1.2"/><path d="M4 0.8V4M7.5 0.8V4M11 0.8V4" stroke="#9a9a9a" stroke-width="1.1"/><path d="M3.6 7H11.4M3.6 9.8H11.4M3.6 12.6H9" stroke="#9a9a9a" stroke-width="1.1"/></svg>
<svg class="b" style="left:6.5px;top:999.5px;" width="17" height="17" viewBox="0 0 17 17"><rect x="4.2" y="1.8" width="11.4" height="11.2" fill="none" stroke="#6e6e6e" stroke-width="1.5"/><path d="M1.4 4.6V15.2H12.8" fill="none" stroke="#8c8c8c" stroke-width="1.4"/></svg>
<div class="b" style="left:1626px;top:1000px;width:15px;height:15px;background:#2f9e3d;border-radius:50%;"></div>
<svg class="b" style="left:1692.5px;top:999.5px;" width="16" height="16" viewBox="0 0 16 16"><path d="M8 3.3A4.7 4.7 0 0 1 11.2 4.5L13.5 2.2A8 8 0 0 0 0.85 4.4L3.5 6.5A4.7 4.7 0 0 1 8 3.3Z" fill="#ea4335"/><path d="M3.5 6.5L0.85 4.4A8 8 0 0 0 0.85 11.6L3.5 9.5A4.7 4.7 0 0 1 3.5 6.5Z" fill="#fbbc05"/><path d="M3.5 9.5L0.85 11.6A8 8 0 0 0 13.4 13.9L10.8 11.9A4.7 4.7 0 0 1 3.5 9.5Z" fill="#34a853"/><path d="M15.7 6.6H8V9.7H12.4A3.8 3.8 0 0 1 10.8 11.9L13.4 13.9A7.8 7.8 0 0 0 15.7 6.6Z" fill="#4285f4"/></svg>
<svg class="b" style="left:1889px;top:1000px;" width="15" height="14" viewBox="0 0 15 14"><path d="M1.2 6.8V4.2Q1.2 1 4.2 1Q7 1 7.2 4.4" fill="none" stroke="#666" stroke-width="1.6"/><rect x="4" y="6.9" width="10.2" height="6.6" fill="#666"/></svg>
<div class="b" style="left:1878.6px;top:837.8px;width:42px;height:177.6px;background:rgba(62,62,72,0.385);border-radius:10px 0 0 9px;"></div>
<div class="b" style="left:1892.4px;top:851.2px;width:13.4px;height:13.4px;background:#0fbd60;border-radius:50%;border:1px solid #3f74c8;"></div>
<div class="b" style="left:1883px;top:878px;width:37px;height:1px;background:rgba(170,190,190,0.55);"></div>
<div class="b" style="left:1893.1px;top:885.9px;width:12.5px;height:36.6px;border-radius:6.2px;background:linear-gradient(#b8b8bd 0%,#bcbcc0 43%,#e0b21c 44%,#c9c338 58%,#74c46a 78%,#3fbcae 100%);"></div>
<div class="b" style="left:1883px;top:933px;width:37px;height:1px;background:rgba(170,190,190,0.55);"></div>
<svg class="b" style="left:1884.6px;top:959.6px;" width="8" height="10" viewBox="0 0 8 10"><path d="M3.8 0.2L7.4 4.4H4.7V9.4H2.9V4.4H0.2Z" fill="#1ea0ff"/></svg>
<svg class="b" style="left:1884.6px;top:993.4px;" width="8" height="10" viewBox="0 0 8 10"><path d="M3.8 9.6L7.4 5.4H4.7V0.4H2.9V5.4H0.2Z" fill="#12c24a"/></svg>
<span class="t" style="left:56px;top:7.00px;font-size:15px;letter-spacing:-0.14px;"><u>F</u>ile</span>
<span class="t" style="left:97.5px;top:7.00px;font-size:15px;letter-spacing:0.07px;"><u>E</u>dit</span>
<span class="t" style="left:141px;top:7.00px;font-size:15px;letter-spacing:0.52px;"><u>V</u>iew</span>
<span class="t" style="left:192.5px;top:7.00px;font-size:15px;letter-spacing:0.48px;"><u>N</u>avigate</span>
<span class="t" style="left:274px;top:7.00px;font-size:15px;letter-spacing:0.63px;"><u>C</u>ode</span>
<span class="t" style="left:328px;top:7.00px;font-size:15px;letter-spacing:0.40px;"><u>R</u>efactor</span>
<span class="t" style="left:406px;top:7.00px;font-size:15px;letter-spacing:-0.26px;"><u>B</u>uild</span>
<span class="t" style="left:458.4px;top:7.00px;font-size:15px;letter-spacing:-0.27px;">R<u>u</u>n</span>
<span class="t" style="left:501.2px;top:7.00px;font-size:15px;letter-spacing:0.50px;"><u>T</u>ools</span>
<span class="t" style="left:558px;top:7.00px;font-size:15px;letter-spacing:0.57px;">VC<u>S</u></span>
<span class="t" style="left:601px;top:7.00px;font-size:15px;letter-spacing:0.58px;"><u>W</u>indow</span>
<span class="t" style="left:677px;top:7.00px;font-size:15px;letter-spacing:0.77px;"><u>H</u>elp</span>
<span class="t" style="left:753px;top:6.50px;font-size:15px;color:#808080;letter-spacing:0.38px;">demo03 - Index.ets [entry]</span>
<span class="t" style="left:15px;top:42.00px;font-size:15px;font-weight:700;letter-spacing:0.38px;">demo03</span>
<span class="t" style="left:98px;top:42.00px;font-size:15px;font-weight:700;letter-spacing:0.11px;">entry</span>
<span class="t" style="left:158px;top:42.00px;font-size:15px;letter-spacing:0.27px;">src</span>
<span class="t" style="left:198.5px;top:42.00px;font-size:15px;letter-spacing:-0.18px;">main</span>
<span class="t" style="left:254px;top:42.00px;font-size:15px;letter-spacing:0.34px;">ets</span>
<span class="t" style="left:296px;top:42.00px;font-size:15px;letter-spacing:0.54px;">pages</span>
<span class="t" style="left:381px;top:42.00px;font-size:15px;letter-spacing:0.29px;">Index.ets</span>
<span class="t" style="left:1395.4px;top:42.70px;font-size:15px;letter-spacing:0.09px;">entry</span>
<span class="t" style="left:1488.5px;top:42.70px;font-size:15px;letter-spacing:0.52px;">No Devices</span>
<span class="t" style="left:20.5px;top:109.30px;font-size:12.9px;letter-spacing:0.09px;transform-origin:0 15.00px;transform:rotate(-90deg);">Project</span>
<span class="t" style="left:20.6px;top:799.20px;font-size:12.9px;letter-spacing:0.32px;transform-origin:0 15.00px;transform:rotate(-90deg);">Structure</span>
<span class="t" style="left:20.5px;top:913.80px;font-size:12.9px;letter-spacing:-0.11px;transform-origin:0 15.00px;transform:rotate(-90deg);">Bookmarks</span>
<span class="t" style="left:68.4px;top:78.00px;font-size:15px;letter-spacing:0.24px;">Project</span>
<span class="t" style="left:81.6px;top:107.90px;font-size:15px;font-weight:700;letter-spacing:0.16px;">demo03</span>
<span class="t" style="left:104.0px;top:132.90px;font-size:15px;letter-spacing:0.40px;">.hvigor</span>
<span class="t" style="left:104.0px;top:157.90px;font-size:15px;letter-spacing:0.13px;">.idea</span>
<span class="t" style="left:104.0px;top:182.90px;font-size:15px;letter-spacing:0.78px;">AppScope</span>
<span class="t" style="left:104.0px;top:207.90px;font-size:15px;font-weight:700;letter-spacing:0.02px;">entry</span>
<span class="t" style="left:126.39999999999999px;top:232.90px;font-size:15px;letter-spacing:0.22px;">.preview</span>
<span class="t" style="left:126.39999999999999px;top:257.90px;font-size:15px;letter-spacing:0.11px;">src</span>
<span class="t" style="left:148.79999999999998px;top:282.90px;font-size:15px;letter-spacing:-0.15px;">main</span>
<span class="t" style="left:171.2px;top:307.90px;font-size:15px;letter-spacing:0.34px;">ets</span>
<span class="t" style="left:193.6px;top:332.90px;font-size:15px;letter-spacing:0.13px;">entryability</span>
<span class="t" style="left:193.6px;top:357.90px;font-size:15px;letter-spacing:0.65px;">pages</span>
<span class="t" style="left:215.99999999999997px;top:382.90px;font-size:15px;letter-spacing:0.28px;">Index.ets</span>
<span class="t" style="left:171.2px;top:407.90px;font-size:15px;letter-spacing:0.34px;">resources</span>
<span class="t" style="left:171.2px;top:432.90px;font-size:15px;letter-spacing:0.15px;">module.json5</span>
<span class="t" style="left:148.79999999999998px;top:457.90px;font-size:15px;letter-spacing:0.64px;">ohosTest</span>
<span class="t" style="left:126.39999999999999px;top:482.90px;font-size:15px;letter-spacing:0.42px;">.gitignore</span>
<span class="t" style="left:126.39999999999999px;top:507.90px;font-size:15px;letter-spacing:0.21px;">build-profile.json5</span>
<span class="t" style="left:126.39999999999999px;top:532.90px;font-size:15px;letter-spacing:0.30px;">hvigorfile.ts</span>
<span class="t" style="left:126.39999999999999px;top:557.90px;font-size:15px;letter-spacing:0.26px;">oh-package.json5</span>
<span class="t" style="left:104.0px;top:582.90px;font-size:15px;letter-spacing:0.45px;">hvigor</span>
<span class="t" style="left:104.0px;top:607.90px;font-size:15px;letter-spacing:0.09px;">oh_modules</span>
<span class="t" style="left:150.6px;top:107.90px;font-size:15px;color:#8c8c8c;letter-spacing:0.30px;">D:\Harmony\demo03</span>
<span class="t" style="left:543.7px;top:78.20px;font-size:15px;letter-spacing:0.15px;">EntryAbility.ts</span>
<span class="t" style="left:706.7px;top:78.20px;font-size:15px;letter-spacing:0.23px;">Index.ets</span>
<span class="t" style="left:523.1px;top:110.80px;font-size:15.8px;font-family:'DejaVu Sans Mono','Liberation Mono',monospace;color:#b2b2b2;">1</span>
<span class="t" style="left:523.1px;top:138.30px;font-size:15.8px;font-family:'DejaVu Sans Mono','Liberation Mono',monospace;color:#b2b2b2;">2</span>
<span class="t" style="left:523.1px;top:165.80px;font-size:15.8px;font-family:'DejaVu Sans Mono','Liberation Mono',monospace;color:#b2b2b2;">3</span>
<span class="t" style="left:523.1px;top:193.30px;font-size:15.8px;font-family:'DejaVu Sans Mono','Liberation Mono',monospace;color:#b2b2b2;">4</span>
<span class="t" style="left:523.1px;top:220.80px;font-size:15.8px;font-family:'DejaVu Sans Mono','Liberation Mono',monospace;color:#b2b2b2;">5</span>
<span class="t" style="left:523.1px;top:248.30px;font-size:15.8px;font-family:'DejaVu Sans Mono','Liberation Mono',monospace;color:#b2b2b2;">6</span>
<span class="t" style="left:523.1px;top:275.80px;font-size:15.8px;font-family:'DejaVu Sans Mono','Liberation Mono',monospace;color:#b2b2b2;">7</span>
<span class="t" style="left:523.1px;top:303.30px;font-size:15.8px;font-family:'DejaVu Sans Mono','Liberation Mono',monospace;color:#b2b2b2;">8</span>
<span class="t" style="left:523.1px;top:330.80px;font-size:15.8px;font-family:'DejaVu Sans Mono','Liberation Mono',monospace;color:#b2b2b2;">9</span>
<span class="t" style="left:513.6px;top:358.30px;font-size:15.8px;font-family:'DejaVu Sans Mono','Liberation Mono',monospace;color:#b2b2b2;">10</span>
<span class="t" style="left:513.6px;top:385.80px;font-size:15.8px;font-family:'DejaVu Sans Mono','Liberation Mono',monospace;color:#b2b2b2;">11</span>
<span class="t" style="left:513.6px;top:413.30px;font-size:15.8px;font-family:'DejaVu Sans Mono','Liberation Mono',monospace;color:#b2b2b2;">12</span>
<span class="t" style="left:513.6px;top:440.80px;font-size:15.8px;font-family:'DejaVu Sans Mono','Liberation Mono',monospace;color:#b2b2b2;">13</span>
<span class="t" style="left:513.6px;top:468.30px;font-size:15.8px;font-family:'DejaVu Sans Mono','Liberation Mono',monospace;color:#b2b2b2;">14</span>
<span class="t" style="left:513.6px;top:495.80px;font-size:15.8px;font-family:'DejaVu Sans Mono','Liberation Mono',monospace;color:#b2b2b2;">15</span>
<span class="t" style="left:513.6px;top:523.30px;font-size:15.8px;font-family:'DejaVu Sans Mono','Liberation Mono',monospace;color:#b2b2b2;">16</span>
<span class="t" style="left:513.6px;top:550.80px;font-size:15.8px;font-family:'DejaVu Sans Mono','Liberation Mono',monospace;color:#b2b2b2;">17</span>
<span class="t" style="left:587px;top:111.00px;font-size:16.6px;font-family:'DejaVu Sans Mono','Liberation Mono',monospace;color:#9e880d;">@Entry</span>
<span class="t" style="left:587px;top:138.50px;font-size:16.6px;font-family:'DejaVu Sans Mono','Liberation Mono',monospace;color:#9e880d;">@Component</span>
<span class="t" style="left:587px;top:166.00px;font-size:16.6px;font-family:'DejaVu Sans Mono','Liberation Mono',monospace;font-weight:700;color:#858c00;">struct</span>
<span class="t" style="left:657px;top:166.00px;font-size:16.6px;font-family:'DejaVu Sans Mono','Liberation Mono',monospace;color:#367f8a;">Index</span>
<span class="t" style="left:717px;top:166.00px;font-size:16.6px;font-family:'DejaVu Sans Mono','Liberation Mono',monospace;color:#e567cf;">{</span>
<span class="t" style="left:607px;top:193.50px;font-size:16.6px;font-family:'DejaVu Sans Mono','Liberation Mono',monospace;color:#9e880d;">@State</span>
<span class="t" style="left:677px;top:193.50px;font-size:16.6px;font-family:'DejaVu Sans Mono','Liberation Mono',monospace;color:#2442a5;">message</span>
<span class="t" style="left:747px;top:193.50px;font-size:16.6px;font-family:'DejaVu Sans Mono','Liberation Mono',monospace;color:#858c00;">:</span>
<span class="t" style="left:767px;top:193.50px;font-size:16.6px;font-family:'DejaVu Sans Mono','Liberation Mono',monospace;color:#000080;">string</span>
<span class="t" style="left:837px;top:193.50px;font-size:16.6px;font-family:'DejaVu Sans Mono','Liberation Mono',monospace;color:#858c00;">=</span>
<span class="t" style="left:857px;top:193.50px;font-size:16.6px;font-family:'DejaVu Sans Mono','Liberation Mono',monospace;color:#6e3584;">&#x27;Hello World&#x27;</span>
<span class="t" style="left:607px;top:248.50px;font-size:16.6px;font-family:'DejaVu Sans Mono','Liberation Mono',monospace;color:#169e9e;">build</span>
<span class="t" style="left:657px;top:248.50px;font-size:16.6px;font-family:'DejaVu Sans Mono','Liberation Mono',monospace;color:#4a55b5;">()</span>
<span class="t" style="left:687px;top:248.50px;font-size:16.6px;font-family:'DejaVu Sans Mono','Liberation Mono',monospace;color:#e567cf;">{</span>
<span class="t" style="left:627px;top:276.00px;font-size:16.6px;font-family:'DejaVu Sans Mono','Liberation Mono',monospace;color:#169e9e;">Row</span>
<span class="t" style="left:657px;top:276.00px;font-size:16.6px;font-family:'DejaVu Sans Mono','Liberation Mono',monospace;color:#4a55b5;">()</span>
<span class="t" style="left:687px;top:276.00px;font-size:16.6px;font-family:'DejaVu Sans Mono','Liberation Mono',monospace;color:#e567cf;">{</span>
<span class="t" style="left:647px;top:303.50px;font-size:16.6px;font-family:'DejaVu Sans Mono','Liberation Mono',monospace;color:#169e9e;">Column</span>
<span class="t" style="left:707px;top:303.50px;font-size:16.6px;font-family:'DejaVu Sans Mono','Liberation Mono',monospace;color:#4a55b5;">()</span>
<span class="t" style="left:737px;top:303.50px;font-size:16.6px;font-family:'DejaVu Sans Mono','Liberation Mono',monospace;color:#e567cf;">{</span>
<span class="t" style="left:667px;top:331.00px;font-size:16.6px;font-family:'DejaVu Sans Mono','Liberation Mono',monospace;color:#169e9e;">Text</span>
<span class="t" style="left:707px;top:331.00px;font-size:16.6px;font-family:'DejaVu Sans Mono','Liberation Mono',monospace;color:#4a55b5;">(</span>
<span class="t" style="left:717px;top:331.00px;font-size:16.6px;font-family:'DejaVu Sans Mono','Liberation Mono',monospace;font-weight:700;color:#858c00;">this</span>
<span class="t" style="left:757px;top:331.00px;font-size:16.6px;font-family:'DejaVu Sans Mono','Liberation Mono',monospace;color:#858c00;">.</span>
<span class="t" style="left:767px;top:331.00px;font-size:16.6px;font-family:'DejaVu Sans Mono','Liberation Mono',monospace;color:#2442a5;">message</span>
<span class="t" style="left:837px;top:331.00px;font-size:16.6px;font-family:'DejaVu Sans Mono','Liberation Mono',monospace;color:#4a55b5;">)</span>
<span class="t" style="left:687px;top:358.50px;font-size:16.6px;font-family:'DejaVu Sans Mono','Liberation Mono',monospace;color:#858c00;">.</span>
<span class="t" style="left:697px;top:358.50px;font-size:16.6px;font-family:'DejaVu Sans Mono','Liberation Mono',monospace;color:#169e9e;">fontSize</span>
<span class="t" style="left:777px;top:358.50px;font-size:16.6px;font-family:'DejaVu Sans Mono','Liberation Mono',monospace;color:#4a55b5;">(</span>
<span class="t" style="left:787px;top:358.50px;font-size:16.6px;font-family:'DejaVu Sans Mono','Liberation Mono',monospace;color:#f5785a;">50</span>
<span class="t" style="left:807px;top:358.50px;font-size:16.6px;font-family:'DejaVu Sans Mono','Liberation Mono',monospace;color:#4a55b5;">)</span>
<span class="t" style="left:687px;top:386.00px;font-size:16.6px;font-family:'DejaVu Sans Mono','Liberation Mono',monospace;color:#858c00;">.</span>
<span class="t" style="left:697px;top:386.00px;font-size:16.6px;font-family:'DejaVu Sans Mono','Liberation Mono',monospace;color:#169e9e;">fontWeight</span>
<span class="t" style="left:797px;top:386.00px;font-size:16.6px;font-family:'DejaVu Sans Mono','Liberation Mono',monospace;color:#4a55b5;">(</span>
<span class="t" style="left:807px;top:386.00px;font-size:16.6px;font-family:'DejaVu Sans Mono','Liberation Mono',monospace;color:#2442a5;">FontWeight</span>
<span class="t" style="left:907px;top:386.00px;font-size:16.6px;font-family:'DejaVu Sans Mono','Liberation Mono',monospace;color:#858c00;">.</span>
<span class="t" style="left:917px;top:386.00px;font-size:16.6px;font-family:'DejaVu Sans Mono','Liberation Mono',monospace;color:#2442a5;">Bold</span>
<span class="t" style="left:957px;top:386.00px;font-size:16.6px;font-family:'DejaVu Sans Mono','Liberation Mono',monospace;color:#4a55b5;">)</span>
<span class="t" style="left:647px;top:413.50px;font-size:16.6px;font-family:'DejaVu Sans Mono','Liberation Mono',monospace;color:#e567cf;">}</span>
<span class="t" style="left:647px;top:441.00px;font-size:16.6px;font-family:'DejaVu Sans Mono','Liberation Mono',monospace;color:#858c00;">.</span>
<span class="t" style="left:657px;top:441.00px;font-size:16.6px;font-family:'DejaVu Sans Mono','Liberation Mono',monospace;color:#169e9e;">width</span>
<span class="t" style="left:707px;top:441.00px;font-size:16.6px;font-family:'DejaVu Sans Mono','Liberation Mono',monospace;color:#4a55b5;">(</span>
<span class="t" style="left:717px;top:441.00px;font-size:16.6px;font-family:'DejaVu Sans Mono','Liberation Mono',monospace;color:#6e3584;">&#x27;100%&#x27;</span>
<span class="t" style="left:777px;top:441.00px;font-size:16.6px;font-family:'DejaVu Sans Mono','Liberation Mono',monospace;color:#4a55b5;">)</span>
<span class="t" style="left:627px;top:468.50px;font-size:16.6px;font-family:'DejaVu Sans Mono','Liberation Mono',monospace;color:#e567cf;">}</span>
<span class="t" style="left:627px;top:496.00px;font-size:16.6px;font-family:'DejaVu Sans Mono','Liberation Mono',monospace;color:#858c00;">.</span>
<span class="t" style="left:637px;top:496.00px;font-size:16.6px;font-family:'DejaVu Sans Mono','Liberation Mono',monospace;color:#169e9e;">height</span>
<span class="t" style="left:697px;top:496.00px;font-size:16.6px;font-family:'DejaVu Sans Mono','Liberation Mono',monospace;color:#4a55b5;">(</span>
<span class="t" style="left:707px;top:496.00px;font-size:16.6px;font-family:'DejaVu Sans Mono','Liberation Mono',monospace;color:#6e3584;">&#x27;100%&#x27;</span>
<span class="t" style="left:767px;top:496.00px;font-size:16.6px;font-family:'DejaVu Sans Mono','Liberation Mono',monospace;color:#4a55b5;">)</span>
<span class="t" style="left:607px;top:523.50px;font-size:16.6px;font-family:'DejaVu Sans Mono','Liberation Mono',monospace;color:#e567cf;">}</span>
<span class="t" style="left:587px;top:551.00px;font-size:16.6px;font-family:'DejaVu Sans Mono','Liberation Mono',monospace;color:#e567cf;">}</span>
<span class="t" style="left:520px;top:602.50px;font-size:15px;color:#595959;letter-spacing:0.33px;">Index</span>
<span class="t" style="left:590px;top:602.50px;font-size:15px;color:#595959;letter-spacing:0.12px;">build()</span>
<span class="t" style="left:668.4px;top:602.50px;font-size:15px;color:#595959;letter-spacing:0.35px;">Row</span>
<span class="t" style="left:729.8px;top:602.50px;font-size:15px;color:#595959;letter-spacing:0.11px;">Column</span>
<span class="t" style="left:1269px;top:78.00px;font-size:15px;letter-spacing:0.24px;">Previewer</span>
<span class="t" style="left:1294.3px;top:327.50px;font-size:20px;font-family:'Liberation Sans',sans-serif;font-weight:700;color:#e04a3a;letter-spacing:0.37px;">Preview failed.</span>
<span class="t" style="left:1294.3px;top:357.50px;font-size:20px;font-family:'Liberation Sans',sans-serif;font-weight:700;color:#e04a3a;letter-spacing:0.54px;">Unable to start the previewer. Open PreviewerLog to</span>
<span class="t" style="left:1294.3px;top:387.50px;font-size:20px;font-family:'Liberation Sans',sans-serif;font-weight:700;color:#e04a3a;letter-spacing:0.50px;">check for details.</span>
<span class="t" style="left:1899.5px;top:93.00px;font-size:13.2px;letter-spacing:-0.03px;transform-origin:0 15.00px;transform:rotate(90deg);">Notifications</span>
<span class="t" style="left:1899.5px;top:220.80px;font-size:13.2px;letter-spacing:-0.41px;transform-origin:0 15.00px;transform:rotate(90deg);">Previewer</span>
<span class="t" style="left:35.3px;top:635.70px;font-size:15px;letter-spacing:0.32px;">PreviewerLog</span>
<span class="t" style="left:719.6px;top:671.80px;font-size:15px;letter-spacing:0.89px;">Regex</span>
<span class="t" style="left:77px;top:713.00px;font-size:16.6px;font-family:'DejaVu Sans Mono','Liberation Mono',monospace;color:#d0131f;">Build task failed. Open the Run window to view details.</span>
<span class="t" style="left:64px;top:970.60px;font-size:13.1px;letter-spacing:0.14px;">Version Control</span>
<span class="t" style="left:207.8px;top:970.60px;font-size:13.1px;letter-spacing:-0.26px;">Run</span>
<span class="t" style="left:275.7px;top:970.60px;font-size:13.1px;letter-spacing:0.82px;">TODO</span>
<span class="t" style="left:361px;top:970.60px;font-size:13.1px;letter-spacing:-0.25px;">Problems</span>
<span class="t" style="left:465.9px;top:970.60px;font-size:13.1px;letter-spacing:-0.31px;">Terminal</span>
<span class="t" style="left:569px;top:970.60px;font-size:13.1px;letter-spacing:-0.21px;">Profiler</span>
<span class="t" style="left:658px;top:970.60px;font-size:13.1px;letter-spacing:0.05px;">Log</span>
<span class="t" style="left:724.7px;top:970.60px;font-size:13.1px;letter-spacing:0.09px;">Code Linter</span>
<span class="t" style="left:845px;top:970.60px;font-size:13.1px;letter-spacing:-0.11px;">Services</span>
<span class="t" style="left:943px;top:970.60px;font-size:13.1px;letter-spacing:-0.14px;">PreviewerLog</span>
<span class="t" style="left:34.5px;top:996.00px;font-size:15px;letter-spacing:0.32px;">App Launch: Select a device first. (29 minutes ago)</span>
<span class="t" style="left:1656px;top:996.00px;font-size:15px;letter-spacing:-0.13px;">2:1</span>
<span class="t" style="left:1724.3px;top:996.00px;font-size:15px;letter-spacing:-0.49px;">LF</span>
<span class="t" style="left:1755px;top:996.00px;font-size:15px;letter-spacing:0.31px;">UTF-8</span>
<span class="t" style="left:1813px;top:996.00px;font-size:15px;letter-spacing:0.35px;">2 spaces</span>
<span class="t" style="left:1889.8px;top:939.70px;font-size:13.4px;color:#fff;letter-spacing:0.08px;">0.0</span>
<span class="t" style="left:1897.8px;top:954.80px;font-size:10.8px;color:#dedede;letter-spacing:-0.19px;">K/s</span>
<span class="t" style="left:1889.8px;top:973.60px;font-size:13.4px;color:#fff;letter-spacing:0.08px;">0.0</span>
<span class="t" style="left:1897.8px;top:988.30px;font-size:10.8px;color:#dedede;letter-spacing:-0.19px;">K/s</span>
</body></html>
